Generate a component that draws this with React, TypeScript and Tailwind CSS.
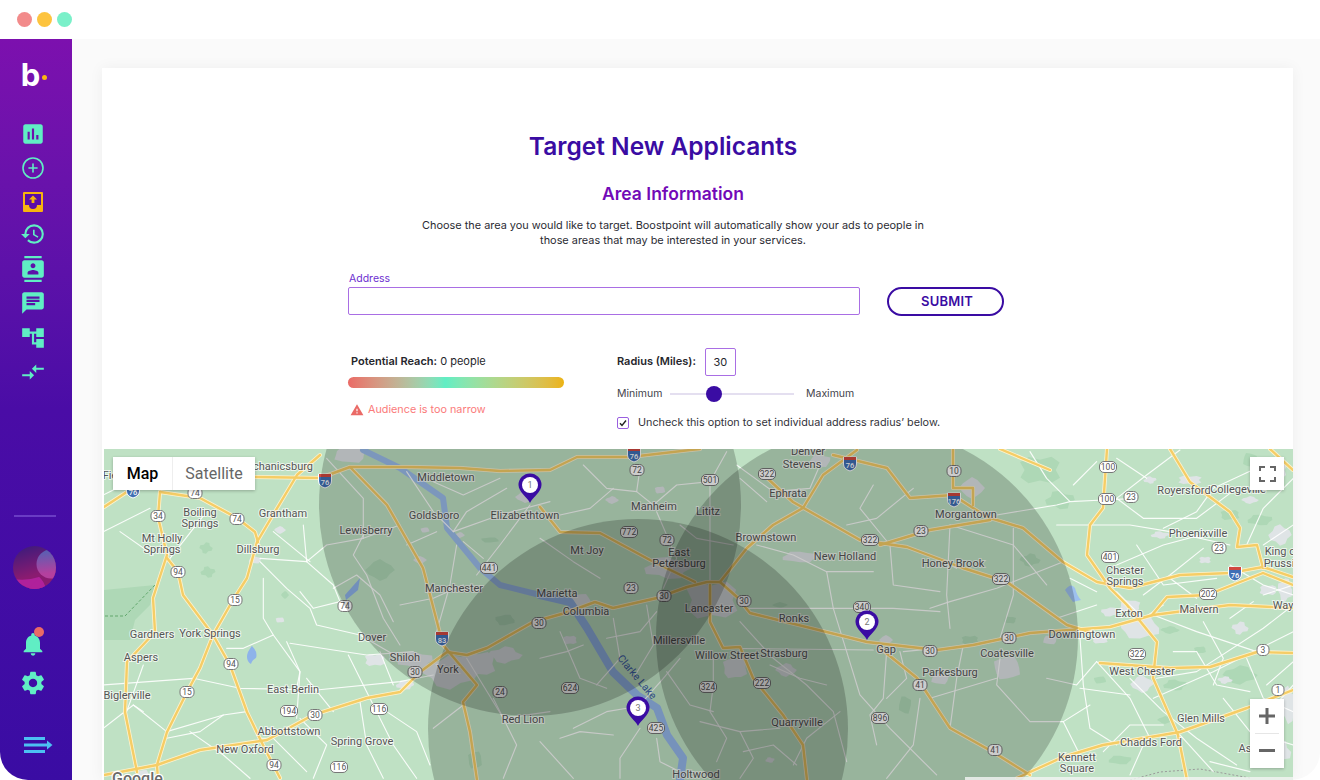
import {
  MdAssessment,
  MdHistory,
  MdContacts,
  MdChat,
  MdAccountTree,
  MdCompareArrows,
  MdNotifications,
  MdSettings,
  MdWarning,
} from "react-icons/md";
import { CirclePlus } from "lucide-react";

// labels: text, centre x, centre y (page coordinates)
const labels: [string, number, number][] = [
  ["Fie", 110, 475], ["chanicsburg", 283, 466], ["Middletown", 446, 477], ["Elizabethtown", 525, 515],
  ["Manheim", 654, 506], ["Lititz", 708, 511], ["Goldsboro", 434, 515], ["Lewisberry", 366, 530],
  ["Boiling", 200, 512], ["Springs", 200, 523], ["Grantham", 283, 513], ["Mt Holly", 162, 538], ["Springs", 162, 549],
  ["Dillsburg", 258, 549], ["Mt Joy", 587, 550], ["East", 679, 552], ["Petersburg", 679, 563],
  ["Brownstown", 766, 537], ["Denver", 808, 451], ["Stevens", 802, 464], ["Ephrata", 788, 493],
  ["New Holland", 845, 556], ["Honey Brook", 953, 563], ["Morgantown", 966, 514], ["Royersford", 1184, 490],
  ["Collegeville", 1238, 489], ["Manchester", 454, 588], ["Marietta", 557, 593], ["Columbia", 586, 611],
  ["Lancaster", 709, 608], ["Ronks", 794, 618], ["Gap", 886, 649], ["Strasburg", 784, 653], ["Willow Street", 727, 655],
  ["Millersville", 679, 640], ["York", 448, 669], ["Shiloh", 405, 657], ["Dover", 372, 637], ["Gardners", 152, 634],
  ["York Springs", 210, 633], ["Aspers", 141, 657], ["Biglerville", 127, 695], ["East Berlin", 293, 689],
  ["Abbottstown", 289, 731], ["New Oxford", 245, 749], ["Spring Grove", 362, 741], ["Red Lion", 523, 719],
  ["Holtwood", 696, 774], ["Quarryville", 797, 722], ["Parkesburg", 950, 672], ["Coatesville", 1007, 653],
  ["Downingtown", 1082, 634], ["Exton", 1129, 613], ["Malvern", 1199, 609], ["Chester", 1125, 570], ["Springs", 1125, 581],
  ["Phoenixville", 1198, 533], ["King of", 1282, 551], ["Prussia", 1282, 563], ["Way", 1283, 605], ["West Chester", 1142, 671],
  ["Glen Mills", 1201, 718], ["Chadds Ford", 1151, 742], ["Kennett", 1077, 757], ["Square", 1077, 768], ["As", 1245, 748],
];

const shields: [string, number, number][] = [
  ["74", 195, 493], ["34", 158, 516], ["74", 237, 519], ["94", 178, 572], ["15", 235, 600], ["74", 345, 606],
  ["94", 231, 664], ["15", 187, 692], ["194", 289, 711], ["30", 315, 715], ["116", 379, 709], ["30", 415, 672],
  ["94", 274, 765], ["116", 339, 767], ["441", 489, 568], ["30", 539, 623], ["24", 500, 692], ["72", 637, 470],
  ["501", 710, 480], ["322", 767, 474], ["772", 629, 532], ["72", 667, 540], ["23", 631, 588], ["30", 664, 596],
  ["30", 744, 601], ["624", 570, 688], ["324", 708, 687], ["222", 762, 683], ["425", 656, 728], ["340", 862, 607],
  ["322", 870, 540], ["23", 921, 531], ["30", 930, 651], ["41", 920, 685], ["896", 880, 718], ["10", 954, 471],
  ["100", 1108, 467], ["100", 1107, 499], ["23", 1131, 497], ["401", 1110, 557], ["322", 1001, 579], ["202", 1208, 594],
  ["30", 1009, 638], ["322", 1137, 654], ["23", 1219, 548], ["3", 1263, 650], ["1", 1278, 690], ["41", 995, 750],
];

const interstates: [string, number, number][] = [
  ["76", 325, 480], ["83", 442, 638], ["76", 634, 454], ["76", 850, 463], ["176", 954, 499], ["76", 1235, 573], ["76", 133, 490],
];

const highways = [
  "104,507 133,488 165,478 257,477 320,478 350,467 407,467 460,468 500,471 550,470 577,457 630,457 690,450 700,449",
  "320,455 297,475 273,515 257,542 247,578 233,600 213,635 200,668 187,692 167,732 157,765 158,780",
  "160,492 200,498 237,518 255,532 258,542",
  "167,558 178,572 183,595 213,635 230,665 247,712 263,745 280,778",
  "160,492 158,517 167,555 153,598 155,632 127,662 125,712 137,772",
  "104,775 157,765 200,750 267,740 313,715 367,698 400,692 420,672 447,652 467,655 487,648 533,622 565,613 595,602 613,608 657,598 687,587 707,582 720,582 737,597 750,613 867,642 937,650 973,645 1030,633 1110,627 1153,615 1230,605 1293,608",
  "350,467 387,505 423,568 443,645 477,685 463,702 470,732 477,780",
  "540,507 560,532 600,533 650,560 695,582",
  "710,585 710,622 723,648 740,647 753,678 783,715 803,745 807,780",
  "720,582 747,548 773,525 803,508 823,475 857,450",
  "833,455 887,468 910,498 953,495 987,517 1023,528 1063,562 1097,582 1130,588 1180,575 1230,573 1263,567 1293,577",
  "767,478 793,502 860,540 907,547 963,568 1007,582 1067,625 1090,632",
  "953,449 953,488 973,488 973,505",
  "1107,449 1103,508 1090,525 1087,555 1110,588 1127,605 1157,642 1153,678 1178,735 1187,780",
  "1152,615 1167,597 1207,595 1263,573",
  "880,648 917,678 950,728 993,752 1030,775",
  "1017,778 1063,757 1103,745 1180,732 1247,708 1293,690",
  "1100,663 1170,668 1210,667 1257,652 1293,653",
  "1170,449 1190,482 1230,512 1240,528 1237,547 1257,545 1263,568",
  "1263,573 1293,585",
  "880,545 930,530 990,520",
  "1000,449 1050,470",
  "1270,449 1293,470",
];

// minor roads traced from the 3x crops, so each group is scaled down by 3
const roadsLeft = [
  "10,260 150,190", "480,340 620,350 700,420 720,470 640,490 600,440", "480,350 560,430 630,490 650,540 780,570 900,640",
  "490,400 490,520 520,570 600,680 590,730", "520,570 430,610 380,610", "570,595 700,615 800,630 940,620",
  "745,630 800,740 830,800 880,900 950,1000", "10,720 280,700 420,730 650,735 900,710 1000,690", "100,780 200,860 370,810 440,800",
  "130,660 80,800", "790,270 760,330 800,390 850,520 900,600", "620,350 680,300 790,280 900,240", "700,430 770,390 840,450 880,530",
  "900,480 1000,460 1090,420", "1090,290 1150,340", "1070,300 1050,420 1010,560", "1060,260 1200,210 1350,170",
  "920,80 1000,200 1060,260", "610,240 620,350", "10,150 70,120", "480,880 520,880 620,980", "780,770 800,900 850,1000",
  "370,810 300,860 200,880", "680,40 790,160 790,280", "1100,640 1210,820 1350,800", "1090,780 1000,850", "1180,760 1250,900 1210,1000",
  "160,330 60,260", "560,590 600,680 590,820", "860,800 950,860 990,960", "1220,130 1100,200 1060,260", "1290,180 1200,300 1130,390",
  "520,260 630,350", "210,340 320,200", "10,850 100,780 130,800", "270,860 370,930 450,1000", "600,820 680,900 640,1000",
  "1000,110 1090,150 1200,100", "920,300 1010,260", "840,620 880,720", "620,700 700,800",
];
const roadsMid = [
  "130,60 200,130 290,140 300,70", "220,130 150,190 60,210", "290,140 340,180 410,120 510,110 510,200 510,330 510,410", "510,110 560,20",
  "350,200 380,270 410,340 370,430", "580,300 470,280 420,240", "650,300 760,330 860,380 1000,380", "620,490 880,490 1060,490 1200,500",
  "550,610 1000,615", "860,380 880,490 920,620 960,750 1050,850 1190,990", "1040,620 1030,760 990,810 1010,900", "600,530 700,640 800,720 880,800 920,950",
  "520,640 520,720 510,800 560,880 530,950", "380,680 450,780 520,800", "220,870 120,860 60,880", "300,850 240,940 240,1000", "100,850 200,800 260,790",
  "350,880 360,950 420,980", "480,830 600,860 720,850", "0,280 100,350 180,400", "0,640 80,620 130,600", "60,560 120,700 200,730", "220,520 240,640 170,720",
  "840,60 810,130 700,140 590,60", "1000,120 960,190 1050,300 1060,420 1200,440", "1090,620 1190,610", "900,800 800,880 760,960", "0,890 100,1000",
  "320,480 340,600 280,700", "420,640 370,700 300,780", "1140,760 1120,900 1040,1000", "600,860 640,940 600,1000", "1080,620 1100,700 1040,760",
  "690,660 780,700 860,720", "610,920 700,900 770,960", "920,240 1010,220 1120,130", "600,100 680,170", "200,580 300,560 350,500",
];
const roadsRight = [
  "420,170 380,180 200,210", "300,20 350,100 420,170 520,165 620,160", "380,240 470,240 600,240 720,260 900,300",
  "750,15 650,90 560,160 640,220 800,220 920,130", "560,360 700,300 850,260", "820,310 720,390 640,450", "1000,60 850,130 800,200 700,250",
  "1090,100 1000,190 950,300", "670,510 800,560 980,620", "820,530 880,640 850,720", "680,700 800,680 1000,550 1090,480", "670,760 850,680 1090,560",
  "450,580 460,720 480,850 560,900", "500,650 600,760 660,880", "600,700 700,800 800,880 920,960", "500,480 380,520", "1000,450 1090,420",
  "450,730 600,750", "750,870 850,980", "400,830 450,930", "60,240 250,300 350,420", "0,330 80,370", "60,240 50,450 60,550", "250,250 250,450 210,580",
  "0,490 60,470 200,430 400,350", "210,640 200,720 300,830 400,830 480,780", "0,760 200,700", "100,600 80,700 60,850", "350,700 440,720 500,650",
  "880,760 960,860 1090,900", "950,640 1000,760 1090,800", "650,100 560,40", "900,360 1000,420 1090,450", "640,900 600,990", "840,950 960,980",
  "430,120 500,50", "720,400 800,460", "500,440 420,400", "900,520 970,470", "1010,720 1090,650", "560,440 640,520 700,480",
  "620,300 700,420 860,400", "1000,300 1090,240", "730,620 800,620 860,720 960,740", "520,920 600,840 700,840", "1000,820 1090,720",
];

const urban: [number, number, number, number][] = [
  [712, 600, 30, 22], [668, 568, 26, 12], [450, 672, 30, 18], [478, 664, 20, 14], [415, 660, 20, 9], [786, 670, 11, 7], [735, 668, 14, 12],
  [800, 557, 20, 6], [612, 500, 7, 4], [660, 490, 6, 4], [820, 461, 12, 7], [972, 488, 13, 11], [1007, 668, 15, 13], [940, 679, 10, 6], [886, 640, 7, 5],
  [580, 600, 12, 7], [350, 455, 18, 9], [525, 497, 10, 6], [1140, 628, 22, 12], [1130, 606, 12, 7], [1142, 684, 12, 9], [1110, 612, 10, 5],
  [1272, 470, 18, 11], [1280, 535, 12, 11], [1285, 590, 8, 13], [1268, 590, 10, 6], [1288, 705, 10, 20], [1280, 752, 12, 13], [1190, 480, 14, 5],
  [1150, 480, 7, 4], [1240, 628, 9, 7], [1205, 560, 7, 4], [1160, 535, 10, 4], [1225, 680, 8, 4], [375, 660, 12, 7], [405, 685, 10, 5],
  [505, 655, 18, 9], [570, 640, 8, 5], [770, 760, 5, 3], [1250, 500, 9, 4], [1100, 640, 9, 4], [180, 470, 14, 5], [460, 535, 5, 3],
  [280, 620, 5, 3], [255, 560, 7, 4], [280, 530, 6, 4], [143, 775, 7, 6], [270, 730, 7, 3], [420, 560, 7, 4], [425, 530, 5, 3], [1050, 640, 8, 5],
];

const forest: [number, number, number, number][] = [
  [208, 572, 8, 6], [206, 548, 7, 6], [1040, 470, 24, 16], [1060, 500, 16, 10], [1030, 560, 11, 7], [970, 640, 10, 5], [1175, 685, 13, 6], [1240, 675, 18, 10],
  [1230, 515, 11, 6], [1260, 520, 14, 6], [1170, 630, 10, 4], [1200, 650, 7, 4], [1120, 760, 13, 5], [1165, 720, 8, 4], [475, 760, 8, 10], [905, 705, 7, 10],
  [285, 595, 4, 4], [1100, 680, 7, 4], [1250, 460, 8, 8], [780, 605, 8, 3], [490, 540, 10, 3], [1010, 620, 7, 4], [380, 570, 15, 11], [505, 620, 11, 6],
];

// irregular outline for towns and woods, same shape on every render
function blob(cx: number, cy: number, rx: number, ry: number, seed: number) {
  const pts: string[] = [];
  for (let i = 0; i < 12; i++) {
    const a = (i / 12) * Math.PI * 2;
    const k = 0.62 + 0.38 * Math.abs(Math.sin(seed * 7.3 + i * 2.1));
    pts.push(`${(cx + Math.cos(a) * rx * k).toFixed(1)},${(cy + Math.sin(a) * ry * k).toFixed(1)}`);
  }
  return pts.join(" ");
}

function Icon({ children }: { children: React.ReactNode }) {
  return <div className="flex h-[34px] items-center justify-center text-[#60eec4]">{children}</div>;
}

function Sidebar() {
  return (
    <aside className="flex w-[72px] shrink-0 flex-col rounded-bl-[28px] bg-gradient-to-b from-[#7c10ae] via-[#4a0ca6] via-50% to-[#3a0ca3] pr-[6px]">
      <div className="flex h-[78px] items-start justify-center pt-[18px] pl-[2px]">
        <span className="text-[31px] leading-[36px] font-bold text-white">b</span>
        <span className="mt-[18px] ml-[2px] h-[5px] w-[5px] rounded-full bg-[#fbb60f]" />
      </div>
      <Icon><MdAssessment size={26} /></Icon>
      <Icon><CirclePlus size={24} strokeWidth={1.6} /></Icon>
      <Icon>
        <svg width="20" height="20" viewBox="0 0 20 20">
          <rect width="20" height="20" rx="1" fill="#f8b40d" />
          <path d="M2 2h16v11h-4a4 4 0 0 1-8 0H2z" fill="#5a0ca8" />
          <path d="M10 3.500 6 7.500h2.600V11h2.800V7.500H14z" fill="#f8b40d" />
        </svg>
      </Icon>
      <Icon><MdHistory size={26} className="-translate-y-[2px]" /></Icon>
      <Icon><MdContacts size={26} className="-translate-y-px" /></Icon>
      <Icon><MdChat size={26} className="-translate-y-px" /></Icon>
      <Icon><MdAccountTree size={26} /></Icon>
      <Icon><MdCompareArrows size={26} /></Icon>
      <div className="mt-[126px] ml-[14px] h-[2px] w-[42px] bg-[#6a3cc4]" />
      <div className="mt-[29px] ml-[13px] flex">
        <svg width="43" height="43" viewBox="0 0 43 43">
          <defs>
            <clipPath id="avatarClip"><circle cx="21.500" cy="21.500" r="21.500" /></clipPath>
            <linearGradient id="avatarBase" x1="0.2" y1="0" x2="0.5" y2="1">
              <stop offset="0" stopColor="#3c1b7c" />
              <stop offset="0.7" stopColor="#8a1b70" />
            </linearGradient>
            <linearGradient id="avatarSide" x1="0.5" y1="0" x2="0.6" y2="1">
              <stop offset="0" stopColor="#5560b4" />
              <stop offset="0.8" stopColor="#b4409e" />
            </linearGradient>
          </defs>
          <g clipPath="url(#avatarClip)">
            <rect width="43" height="43" fill="url(#avatarBase)" />
            <path d="M0 33q14 2 26-2 6 6 6 12H0z" fill="#b0219b" />
            <circle cx="38" cy="18" r="14.500" fill="url(#avatarSide)" />
            <path d="M26 31q5 4 7 12H14q8-6 12-12z" fill="#b0219b" />
          </g>
        </svg>
      </div>
      <div className="relative mt-[41px] flex justify-center">
        <MdNotifications size={28} className="text-[#60eec4]" />
        <span className="absolute top-[-3px] left-[34px] h-[10px] w-[10px] rounded-full bg-[#ea6a66]" />
      </div>
      <div className="mt-[11px] flex justify-center text-[#60eec4]"><MdSettings size={28} /></div>
      <div className="mt-[38px] ml-[23px] flex">
        <svg width="30" height="20" viewBox="0 0 30 20" fill="#4cc0f2">
          <rect x="1" y="2" width="21" height="3" />
          <rect x="1" y="8.500" width="24" height="3" />
          <rect x="1" y="15" width="21" height="3" />
          <path d="M24 5.500 29.500 10 24 14.500z" />
        </svg>
      </div>
    </aside>
  );
}

function RoadGroup({ x, y, roads }: { x: number; y: number; roads: string[] }) {
  return (
    <g transform={`translate(${x} ${y}) scale(0.3333)`} fill="none" stroke="#ffffff" strokeOpacity="0.9" strokeWidth="3.400" strokeLinejoin="round" strokeLinecap="round">
      {roads.map((r, i) => <polyline key={i} points={r} />)}
    </g>
  );
}

function Pin({ x, y, n }: { x: number; y: number; n: string }) {
  return (
    <g transform={`translate(${x} ${y})`}>
      <path d="M0 12C-2 7-11.500 1-11.500-6A11.500 11.500 0 1 1 11.500-6C11.500 1 2 7 0 12z" fill="#3a0ca3" />
      <circle cx="0" cy="-6" r="8" fill="#fff" />
      <text x="0" y="-6" textAnchor="middle" dominantBaseline="central" fontSize="9" fill="#777">{n}</text>
    </g>
  );
}

function MapArea() {
  return (
    <div className="relative ml-[2px] h-[331px] w-[1189px] shrink-0 overflow-hidden bg-[#bfe1c4]">
      <svg width="1189" height="331" viewBox="104 449 1189 331" className="block font-['Roboto',sans-serif]">
        <path d="M104 590 155 585 150 605 135 620 130 640 104 640z" fill="#aed8b6" />
        {forest.map(([cx, cy, rx, ry], i) => <polygon key={i} points={blob(cx, cy, rx, ry, i + 1)} fill="#aed8b6" />)}
        {urban.map(([cx, cy, rx, ry], i) => <polygon key={i} points={blob(cx, cy, rx, ry, i + 40)} fill="#dfe4e6" />)}
        <polyline points="363,450 400,468 443,498 447,528 480,568 500,585 540,595" fill="none" stroke="#9cbdec" strokeWidth="6" strokeLinecap="round" strokeLinejoin="round" />
        <polyline points="540,595 570,602 587,628 613,672 637,695 657,708 667,735 683,758 680,780" fill="none" stroke="#94b7ea" strokeWidth="8" strokeLinecap="round" strokeLinejoin="round" />
        <path d="M248 652q5-8 4-6 6 6 4 12-4 2-5 6-6-4-3-12z" fill="#8eb3ea" />
        <path d="M345 595 360 578 358 590 346 600z" fill="#8eb3ea" />
        <path d="M1065 590q6-8 10-2 2 8 6 12l-8 2z" fill="#9dc0ee" />
        <polyline points="105,616 125,616 155,585" fill="none" stroke="#62a86d" strokeWidth="1" strokeDasharray="3 2" />
        <polyline points="1130,780 1160,772 1200,769 1250,778" fill="none" stroke="#9a9a9a" strokeWidth="1" strokeDasharray="2 2" />
        <RoadGroup x={100} y={445} roads={roadsLeft} />
        <RoadGroup x={540} y={445} roads={roadsMid} />
        <RoadGroup x={930} y={445} roads={roadsRight} />
        <g fill="none" strokeLinejoin="round" strokeLinecap="round">
          {highways.map((h, i) => <polyline key={`o${i}`} points={h} stroke="#fdf3cf" strokeWidth="4" />)}
          {highways.map((h, i) => <polyline key={`i${i}`} points={h} stroke="#f5cd66" strokeWidth="2.400" />)}
        </g>
        {shields.map(([n, x, y], i) => {
          const w = n.length > 2 ? 17 : n.length > 1 ? 14 : 12;
          return (
            <g key={i}>
              <rect x={x - w / 2} y={y - 5.500} width={w} height={11} rx="4.500" fill="#fff" stroke="#777" strokeWidth="1" />
              <text x={x} y={y} textAnchor="middle" dominantBaseline="central" fontSize="8.500" fill="#555">{n}</text>
            </g>
          );
        })}
        {interstates.map(([n, x, y], i) => (
          <g key={i}>
            <path d={`M${x - 6.500} ${y - 6}h13v7q0 5-6.500 7q-6.500-2-6.500-7z`} fill="#3f6fb5" stroke="#fff" strokeWidth="1" />
            <rect x={x - 6} y={y - 6} width="12" height="3" fill="#d0473f" />
            <text x={x} y={y + 2} textAnchor="middle" dominantBaseline="central" fontSize="7.500" fontWeight="500" fill="#fff">{n}</text>
          </g>
        ))}
        <g fontSize="11" fill="#555555" stroke="#ffffff" strokeOpacity="0.7" strokeWidth="2" textAnchor="middle" dominantBaseline="central" className="[paint-order:stroke]">
          {labels.map(([t, x, y], i) => <text key={i} x={x} y={y}>{t}</text>)}
          <text x="637" y="677" fontSize="10.500" fill="#3d5fa8" stroke="none" transform="rotate(50 637 677)" textAnchor="middle">Clarke Lake</text>
        </g>
        <g fill="#000000" fillOpacity="0.2">
          <circle cx="530" cy="505" r="211" />
          <circle cx="867" cy="637" r="211" />
          <circle cx="638" cy="729" r="210" />
        </g>
        <rect x="965" y="777" width="328" height="3" fill="#f5f5f5" fillOpacity="0.8" />
        <text x="112" y="784" fontSize="16" fontWeight="500" fill="#6a6a6a" stroke="#fff" strokeWidth="2.500" className="[paint-order:stroke]">Google</text>
        <Pin x={530} y={491} n="1" />
        <Pin x={867} y={628} n="2" />
        <Pin x={638} y={714} n="3" />
      </svg>

      <div className="absolute top-[8px] left-[9px] flex h-[33px] bg-white font-['Roboto',sans-serif] text-[16px] shadow-[0_1px_3px_rgba(0,0,0,0.25)]">
        <div className="flex w-[59px] items-center justify-center font-medium text-black">Map</div>
        <div className="flex w-[83px] items-center justify-center border-l border-[#eeeeee] text-[#666666]">Satellite</div>
      </div>
      <div className="absolute top-[8px] right-[9px] flex h-[33px] w-[34px] items-center justify-center bg-white shadow-[0_1px_3px_rgba(0,0,0,0.25)]">
        <svg width="17" height="16" viewBox="0 0 17 16" fill="none" stroke="#666" strokeWidth="2">
          <path d="M1 5V1h5M11 1h5v4M16 11v4h-5M6 15H1v-4" />
        </svg>
      </div>
      <div className="absolute top-[250px] right-[9px] flex h-[69px] w-[34px] flex-col items-center bg-white shadow-[0_1px_3px_rgba(0,0,0,0.25)]">
        <div className="flex h-[34px] items-center justify-center">
          <svg width="16" height="16" viewBox="0 0 16 16" fill="#666"><path d="M6.500 0h3v6.500H16v3H9.500V16h-3V9.500H0v-3h6.500z" /></svg>
        </div>
        <div className="h-px w-[24px] bg-[#e6e6e6]" />
        <div className="flex h-[34px] items-center justify-center">
          <svg width="16" height="4" viewBox="0 0 16 4" fill="#666"><rect width="16" height="3" /></svg>
        </div>
      </div>
    </div>
  );
}

function Form() {
  return (
    <div className="ml-[246px] w-[656px] shrink-0">
      <h1 className="mt-[62px] mr-[26px] text-center text-[24.500px] leading-[32px] font-semibold text-[#3a0ca3]">Target New Applicants</h1>
      <h2 className="mt-[20px] mr-[6px] text-center text-[17.500px] leading-[24px] font-semibold text-[#7209b7]">Area Information</h2>
      <p className="mt-[12px] mr-[6px] text-center text-[10.900px] leading-[15px] text-[#2b2b33]">
        Choose the area you would like to target. Boostpoint will automatically show your ads to people in
        <br />
        those areas that may be interested in your services.
      </p>
      <label className="mt-[24px] block pl-[1px] text-[10.500px] leading-[14px] text-[#6d2fd0]">Address</label>
      <div className="mt-[1px] flex items-start">
        <input readOnly value="" className="h-[28px] w-[512px] rounded-[2px] border border-[#a96ee4] bg-white outline-none" />
        <button className="ml-[27px] h-[29px] w-[117px] rounded-full border-2 border-[#3a0ca3] pl-[3px] text-[13px] font-semibold tracking-[0.2px] text-[#3a0ca3]">SUBMIT</button>
      </div>
      <div className="mt-[32px] flex">
        <div className="w-[216px] pt-[6px]">
          <div className="pl-[3px] text-[11px] leading-[14px] text-[#26262c]"><span className="font-semibold">Potential Reach:</span> 0 people</div>
          <div className="mt-[9px] h-[11px] rounded-full bg-gradient-to-r from-[#ea6a66] via-[#60eec4] via-45% to-[#ecb30e]" />
          <div className="mt-[15px] flex h-[14px] items-center gap-[4px] pl-[2px] text-[10.800px] text-[#fb7a7a]">
            <MdWarning size={14} className="text-[#ea6a66]" />
            Audience is too narrow
          </div>
        </div>
        <div className="ml-[53px] flex-1">
          <div className="flex h-[28px] items-center">
            <span className="mb-[2px] text-[11px] font-semibold text-[#26262c]">Radius (Miles):</span>
            <div className="ml-[9px] flex h-[28px] w-[31px] items-center justify-center rounded-[2px] border border-[#a96ee4] text-[11px] text-[#26262c]">30</div>
          </div>
          <div className="mt-[10px] flex h-[16px] items-center text-[10.500px] text-[#44444c]">
            <span className="w-[53px]">Minimum</span>
            <div className="relative h-[2px] w-[124px] bg-[#e4dff0]">
              <span className="absolute top-[-7px] left-[36px] h-[16px] w-[16px] rounded-full bg-[#3a0ca3]" />
            </div>
            <span className="ml-[12px]">Maximum</span>
          </div>
          <div className="mt-[14px] flex h-[14px] items-center">
            <div className="flex h-[12px] w-[12px] items-center justify-center rounded-[2px] border border-[#9a5fe0]">
              <svg width="8" height="8" viewBox="0 0 8 8" fill="none" stroke="#222" strokeWidth="1.400"><path d="M1 4.200 3 6.500 7 1.500" /></svg>
            </div>
            <span className="ml-[9px] text-[10.800px] text-[#33333a]">Uncheck this option to set individual address radius’ below.</span>
          </div>
        </div>
      </div>
    </div>
  );
}

export default function App() {
  return (
    <div className="flex h-[780px] w-[1320px] flex-col overflow-hidden bg-white font-['Inter',sans-serif]">
      <div className="flex h-[39px] shrink-0 items-center gap-[5px] pl-[17px]">
        <span className="h-[15px] w-[15px] rounded-full bg-[#f28b8b]" />
        <span className="h-[15px] w-[15px] rounded-full bg-[#fdc43f]" />
        <span className="h-[15px] w-[15px] rounded-full bg-[#7af0c9]" />
      </div>
      <div className="flex min-h-0 flex-1">
        <Sidebar />
        <main className="min-w-0 flex-1 overflow-hidden rounded-br-[28px] bg-[#fafafa] pt-[29px] pr-[27px] pl-[30px]">
          <div className="flex h-[712px] w-[1191px] flex-col bg-white shadow-[0_0_14px_rgba(0,0,0,0.05)]">
            <Form />
            <div className="mt-auto" />
            <MapArea />
          </div>
        </main>
      </div>
    </div>
  );
}
